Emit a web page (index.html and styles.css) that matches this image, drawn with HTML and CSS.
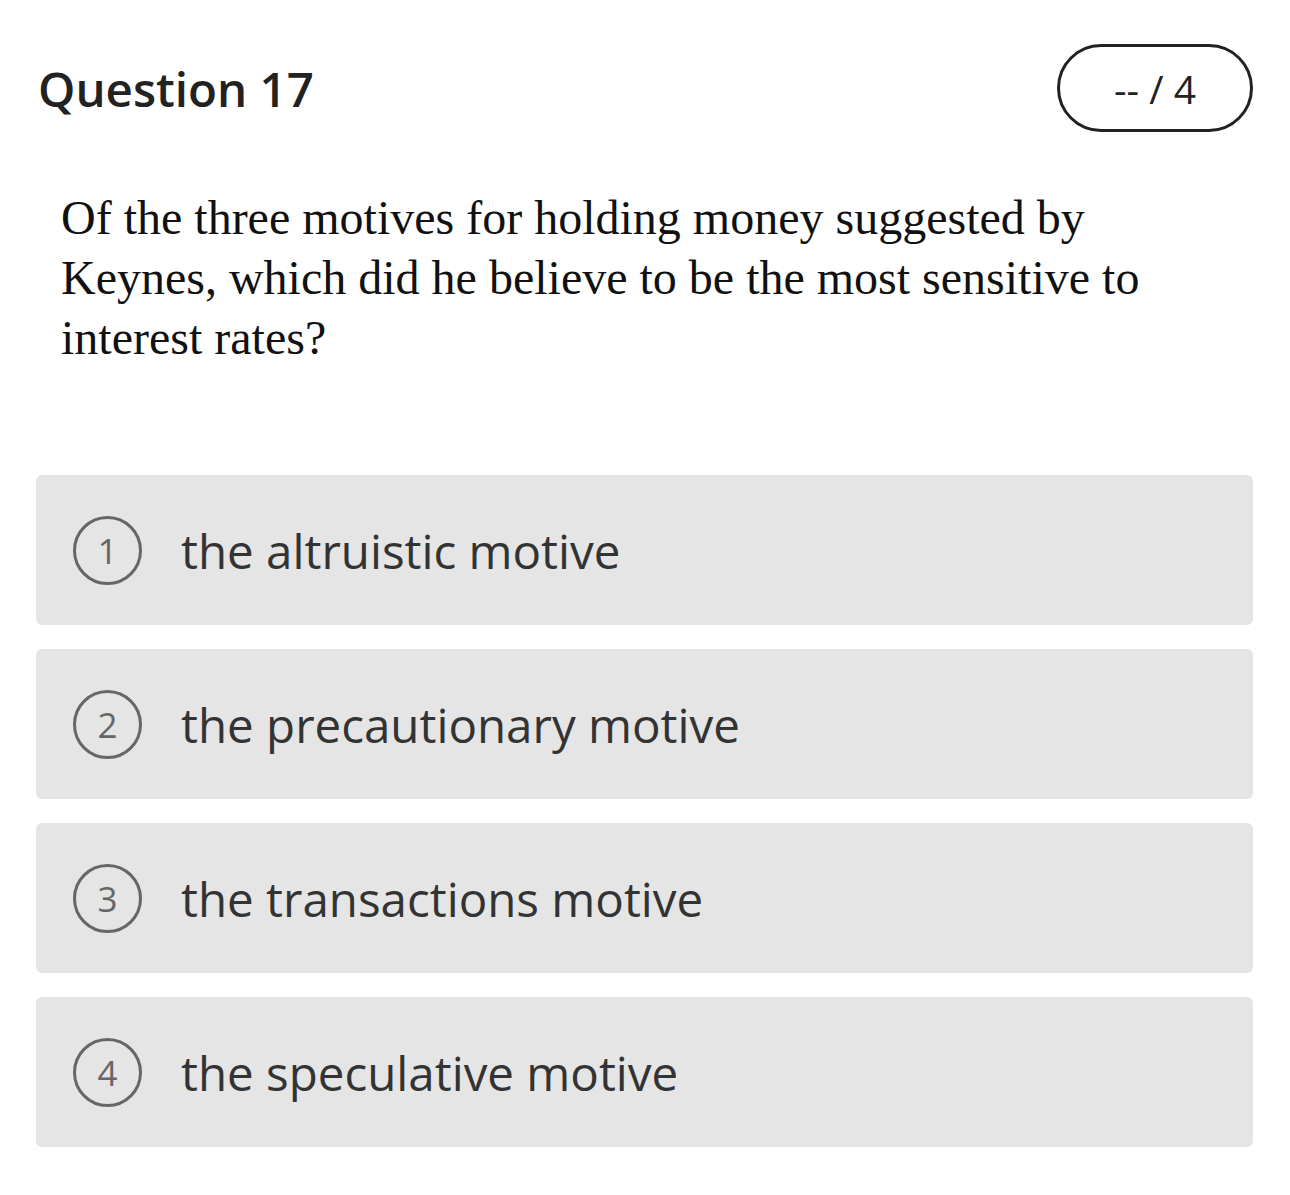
FILE: index.html
```html
<!DOCTYPE html>
<html>
<head>
<meta charset="utf-8">
<link rel="stylesheet" href="styles.css">
</head>
<body>
<div class="page">
  <div class="header">
    <h1 class="title">Question 17</h1>
    <div class="score">-- / 4</div>
  </div>
  <p class="question">Of the three motives for holding money suggested by Keynes, which did he believe to be the most sensitive to interest rates?</p>
  <div class="options">
    <div class="option"><span class="num">1</span><span class="label">the altruistic motive</span></div>
    <div class="option"><span class="num">2</span><span class="label">the precautionary motive</span></div>
    <div class="option"><span class="num">3</span><span class="label">the transactions motive</span></div>
    <div class="option"><span class="num">4</span><span class="label">the speculative motive</span></div>
  </div>
</div>
</body>
</html>
```

FILE: styles.css
```css
html, body {
  margin: 0;
  padding: 0;
  background: #ffffff;
}
.page {
  padding: 44px 37px 0 36px;
  font-family: "Open Sans", sans-serif;
}
.header {
  display: flex;
  align-items: center;
  justify-content: space-between;
  height: 88px;
}
.title {
  margin: 0 0 0 2px;
  font-size: 47.5px;
  font-weight: 600;
  color: #222222;
}
.score {
  box-sizing: border-box;
  width: 196px;
  height: 88px;
  border: 3px solid #222222;
  border-radius: 44px;
  display: flex;
  align-items: center;
  justify-content: center;
  font-size: 39px;
  font-weight: 500;
  color: #222222;
}
.question {
  margin: 56px 0 0 0;
  padding: 0 25px;
  font-family: "Liberation Serif", serif;
  font-size: 48px;
  line-height: 60px;
  color: #111111;
}
.options {
  margin-top: 107px;
  display: flex;
  flex-direction: column;
  gap: 24px;
}
.option {
  height: 150px;
  background: #e5e5e5;
  border-radius: 6px;
  display: flex;
  align-items: center;
  padding-left: 37px;
  box-sizing: border-box;
}
.num {
  box-sizing: border-box;
  width: 69px;
  height: 69px;
  border: 3px solid #666666;
  border-radius: 50%;
  display: flex;
  align-items: center;
  justify-content: center;
  font-size: 35px;
  font-weight: 500;
  color: #666666;
  flex-shrink: 0;
}
.label {
  margin-left: 39px;
  font-size: 47.5px;
  color: #333333;
}
```
